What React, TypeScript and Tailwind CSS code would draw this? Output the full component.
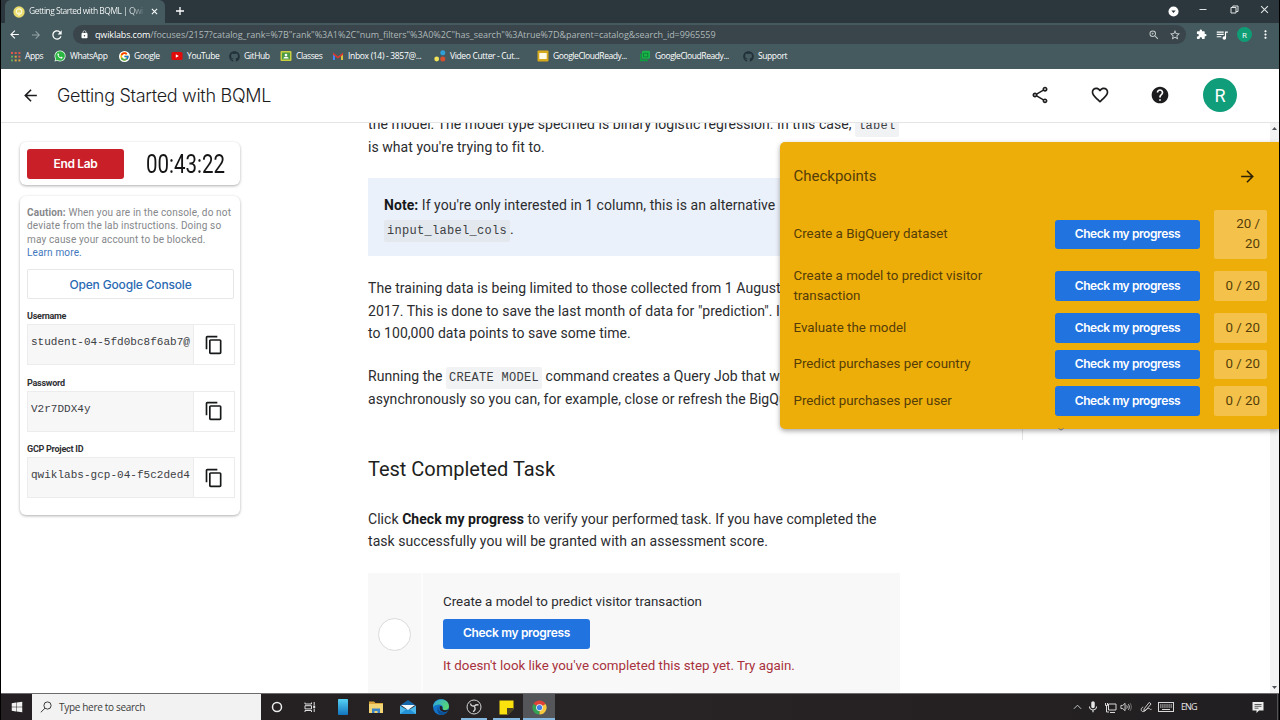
import type { ReactNode } from "react";
import {
  MdArrowBack,
  MdArrowForward,
  MdContentCopy,
  MdExtension,
  MdFavoriteBorder,
  MdHelp,
  MdLock,
  MdMoreVert,
  MdOutlineShare,
  MdQueueMusic,
  MdRefresh,
  MdStarBorder,
  MdZoomIn,
  MdMic,
} from "react-icons/md";
import { FaGithub, FaWindows } from "react-icons/fa";
import { FcGoogle } from "react-icons/fc";

function AppsIcon() {
  const colors = ["#e0574b", "#e0574b", "#e0574b", "#63a85e", "#d9a441", "#e0574b", "#63a85e", "#d9a441", "#d9a441"];
  return (
    <svg viewBox="0 0 11 11" className="size-[11px]">
      {colors.map((c, i) => (
        <rect key={i} x={1 + (i % 3) * 3.7} y={1 + Math.floor(i / 3) * 3.7} width="2" height="2" fill={c} />
      ))}
    </svg>
  );
}

function WhatsAppIcon() {
  return (
    <svg viewBox="0 0 24 24" className="size-[12px]">
      <path d="M12 1a11 11 0 0 0-9.5 16.5L1 23l5.600-1.500A11 11 0 1 0 12 1z" fill="#e9f7ee" />
      <path d="M12 2.500a9.500 9.500 0 0 0-8 14.600L3 21l4-1A9.500 9.500 0 1 0 12 2.500z" fill="#2cb742" />
      <path d="M8.500 6.500c-1.500.5-2 2-1.500 3.500 1 3.500 3.500 6 7 7.200 1.500.4 3-.4 3.300-2 0-.6-2.300-1.700-2.800-1.700-.5.1-1 1.400-1.500 1.300-2-.8-3.200-2-4-3.700 0-.5 1-1 1-1.500 0-.7-.8-3-1.500-3.100z" fill="#fff" />
    </svg>
  );
}

function YouTubeIcon() {
  return (
    <svg viewBox="0 0 12 12" className="size-[12px]">
      <rect x="0.500" y="2" width="11" height="8" rx="1.500" fill="#e00b0b" />
      <path d="M4.800 4.300v3.400L7.800 6z" fill="#fff" />
    </svg>
  );
}

function ClassroomIcon() {
  return (
    <svg viewBox="0 0 12 12" className="size-[12px]">
      <rect x="0.500" y="1" width="11" height="10" rx="1" fill="#c9cf3f" />
      <rect x="2" y="2.500" width="8" height="7" fill="#4d9b45" />
      <circle cx="6" cy="5" r="1.300" fill="#fff" />
      <path d="M3.300 8.500c.3-2.200 5.100-2.200 5.400 0z" fill="#fff" />
    </svg>
  );
}

function GmailIcon() {
  return (
    <svg viewBox="0 0 12 12" className="size-[12px]">
      <path d="M1 3v7h2V5.500z" fill="#4285f4" />
      <path d="M11 3v7H9V5.500z" fill="#d9c23c" />
      <path d="M1 2.500 6 6.500l5-4v2.200l-5 3.800-5-3.800z" fill="#d93a2f" />
    </svg>
  );
}

function VideoCutterIcon() {
  return (
    <svg viewBox="0 0 12 12" className="size-[12px]">
      <circle cx="8.800" cy="2.700" r="2.500" fill="#2f9fd8" />
      <circle cx="2.700" cy="9" r="2.400" fill="#efe35a" />
      <circle cx="8.800" cy="9" r="2.500" fill="#d6502f" />
    </svg>
  );
}

function SlidesIcon() {
  return (
    <svg viewBox="0 0 12 12" className="size-[12px]">
      <rect x="0.500" y="0.500" width="11" height="11" rx="1" fill="#d7a91c" />
      <rect x="2.300" y="3" width="7.400" height="6" fill="#fffbe6" />
    </svg>
  );
}

function GreenIcon() {
  return (
    <svg viewBox="0 0 12 12" className="size-[12px]">
      <rect x="3" y="0.800" width="8" height="8" rx="1.200" fill="#19b34a" />
      <path d="M1 3.500h1.500v6H9v1.700H1z" fill="#0e9d3e" />
      <rect x="4.600" y="3.300" width="4.200" height="3.600" fill="none" stroke="#0b7f31" strokeWidth="0.800" />
    </svg>
  );
}

const bookmarks: { label: string; icon: ReactNode; width: string; track: string }[] = [
  { label: "Apps", icon: <AppsIcon />, width: "w-[45px]", track: "tracking-[-0.400px]" },
  { label: "WhatsApp", icon: <WhatsAppIcon />, width: "w-[64px]", track: "tracking-[-0.400px]" },
  { label: "Google", icon: <FcGoogle className="size-[11px] rounded-full bg-white p-[0.500px]" />, width: "w-[53px]", track: "tracking-[-0.400px]" },
  { label: "YouTube", icon: <YouTubeIcon />, width: "w-[57px]", track: "tracking-[-0.350px]" },
  { label: "GitHub", icon: <FaGithub className="size-[11px] text-[#22303a]" />, width: "w-[52px]", track: "tracking-[-0.400px]" },
  { label: "Classes", icon: <ClassroomIcon />, width: "w-[52px]", track: "tracking-[-0.400px]" },
  { label: "Inbox (14) - 3857@...", icon: <GmailIcon />, width: "w-[102px]", track: "tracking-[-0.320px]" },
  { label: "Video Cutter - Cut...", icon: <VideoCutterIcon />, width: "w-[103px]", track: "tracking-[-0.350px]" },
  { label: "GoogleCloudReady...", icon: <SlidesIcon />, width: "w-[102px]", track: "tracking-[-0.420px]" },
  { label: "GoogleCloudReady...", icon: <GreenIcon />, width: "w-[103px]", track: "tracking-[-0.420px]" },
  { label: "Support", icon: <FaGithub className="size-[11px] text-[#22303a]" />, width: "w-[60px]", track: "tracking-[-0.400px]" },
];

function TabStrip() {
  return (
    <div className="flex h-[23px] items-end bg-[#2b373c] pl-[4px] text-white">
      <div className="flex h-[23px] w-[160px] items-center rounded-t-[6px] bg-[#455a5f] pl-[8px] pr-[4px]">
        <svg viewBox="0 0 12 12" className="size-[12px] shrink-0">
          <circle cx="6" cy="6" r="5.700" fill="#e9dc6b" />
          <circle cx="6" cy="5.500" r="2.700" fill="none" stroke="#fbf8d8" strokeWidth="1.200" />
          <path d="M6 6v4" stroke="#fbf8d8" strokeWidth="1" />
        </svg>
        <span className="ml-[4px] w-[117px] overflow-hidden whitespace-nowrap bg-linear-to-r from-white from-85% to-transparent bg-clip-text text-[8.500px] tracking-[-0.530px] text-transparent">
          Getting Started with BQML | Qwi
        </span>
        <svg viewBox="0 0 8 8" className="ml-[5px] size-[7px] shrink-0" stroke="#fff" strokeWidth="1.200">
          <path d="M1 1l6 6M7 1L1 7" />
        </svg>
      </div>
      <svg viewBox="0 0 10 10" className="mb-[7px] ml-[10px] size-[10px]" stroke="#fff" strokeWidth="1.300">
        <path d="M5 1v8M1 5h8" />
      </svg>
      <div className="ml-auto flex h-[23px] items-start pt-[5px]">
        <svg viewBox="0 0 12 12" className="mr-[20px] mt-[1px] size-[11px]">
          <circle cx="6" cy="6" r="5.500" fill="#fff" />
          <path d="M3.600 4.800h4.800L6 7.700z" fill="#2b373c" />
        </svg>
        <svg viewBox="0 0 8 8" className="mr-[23px] size-[8px]" stroke="#dfe3e4">
          <path d="M0.500 4.500h7" />
        </svg>
        <svg viewBox="0 0 9 9" className="mr-[21px] size-[9px]" stroke="#dfe3e4" fill="none">
          <path d="M1 2.500h5v5.500H1zM2.800 2.500v-1.500h5.200v5.500H6" />
        </svg>
        <svg viewBox="0 0 8 8" className="mr-[10px] size-[9px]" stroke="#dfe3e4">
          <path d="M1 1l6 6M7 1L1 7" />
        </svg>
      </div>
    </div>
  );
}

function Toolbar() {
  return (
    <div className="flex h-[22px] items-center bg-[#455a5f] pl-[7px] pr-[7px] pt-[1px] text-white">
      <MdArrowBack className="size-[13px]" />
      <MdArrowForward className="ml-[9px] size-[12px] text-[#95a3a6]" />
      <MdRefresh className="ml-[8px] size-[14px]" />
      <div className="ml-[9px] flex h-[19px] w-[1113px] items-center rounded-full bg-[#39454a] pl-[7px] pr-[5px]">
        <MdLock className="size-[9px]" />
        <span className="ml-[6px] whitespace-nowrap text-[9px] tracking-[-0.150px] text-white">qwiklabs.com</span>
        <span className="whitespace-nowrap text-[9px] tracking-[-0.030px] text-[#aeb8ba]">
          /focuses/2157?catalog_rank=%7B"rank"%3A1%2C"num_filters"%3A0%2C"has_search"%3Atrue%7D&amp;parent=catalog&amp;search_id=9965559
        </span>
        <MdZoomIn className="ml-auto size-[12px] text-[#c4cbcc]" />
        <MdStarBorder className="ml-[9px] size-[12px] text-[#d5dadb]" />
      </div>
      <MdExtension className="ml-[10px] size-[11px]" />
      <MdQueueMusic className="ml-[8px] size-[14px]" />
      <div className="ml-[8px] flex size-[15px] items-center justify-center rounded-full bg-[#0f9d75] text-[8px] leading-none">R</div>
      <MdMoreVert className="ml-[7px] size-[13px]" />
    </div>
  );
}

function BookmarksBar() {
  return (
    <div className="flex h-[24px] items-center bg-[#455a5f] pb-[2px] pl-[8px] text-[8.500px] text-white">
      {bookmarks.map((b, i) => (
        <div key={i} className={`flex shrink-0 items-center ${b.width}`}>
          <span className="flex w-[12px] shrink-0 justify-center">{b.icon}</span>
          <span className={`ml-[4px] whitespace-nowrap ${b.track}`}>{b.label}</span>
        </div>
      ))}
    </div>
  );
}

function PageHeader() {
  return (
    <header className="flex h-[54px] shrink-0 items-center border-b border-[#e3e4e6] pb-[1px] pl-[20px] pr-[42px] text-[#1c1c1e]">
      <MdArrowBack className="size-[19px]" />
      <h1 className="ml-[17px] font-[Inter] text-[18px] font-light tracking-[-0.300px]">Getting Started with BQML</h1>
      <div className="ml-auto flex items-center">
        <MdOutlineShare className="size-[20px]" />
        <MdFavoriteBorder className="ml-[40px] size-[20px]" />
        <MdHelp className="ml-[40px] size-[20px]" />
        <div className="ml-[33px] flex size-[34px] items-center justify-center rounded-full bg-[#0f9d7a] font-[Roboto] text-[18px] text-white">R</div>
      </div>
    </header>
  );
}

function Credential({ label, value }: { label: string; value: string }) {
  return (
    <div>
      <div className="h-[15px] pt-[1px] text-[9px] font-bold leading-[13px] tracking-[-0.250px] text-[#2f3033]">{label}</div>
      <div className="flex h-[41px] w-[208px] border border-[#ececee]">
        <div className="flex w-[166px] items-center overflow-hidden whitespace-nowrap border-r border-[#ececee] bg-[#f7f7f8] pb-[4px] pl-[3px] font-['Liberation_Mono',monospace] text-[11px] tracking-[0.020px] text-[#3c4043]">
          {value}
        </div>
        <div className="flex flex-1 items-center justify-center">
          <MdContentCopy className="size-[20px] text-[#17181a]" />
        </div>
      </div>
    </div>
  );
}

function Sidebar() {
  return (
    <aside className="ml-[19px] w-[220px] shrink-0 pt-[19px] font-[Roboto]">
      <div className="flex h-[43px] items-center rounded-[6px] bg-white pl-[7px] shadow-[0_1px_3px_rgba(0,0,0,0.320)]">
        <button className="h-[30px] w-[97px] rounded-[3px] bg-[#c91f28] font-[Inter] text-[12px] font-semibold tracking-[-0.350px] text-white">End Lab</button>
        <span className="ml-[22px] w-[80px] origin-left scale-x-[0.820] scale-y-[1.060] whitespace-nowrap text-[25px] leading-none text-[#151517]">00:43:22</span>
      </div>
      <div className="mt-[11px] h-[319px] rounded-[6px] bg-white px-[7px] pt-[10px] shadow-[0_1px_3px_rgba(0,0,0,0.320)]">
        <p className="whitespace-nowrap text-[10px] leading-[13.300px] tracking-[0.150px] text-[#85878a]">
          <b>Caution:</b> When you are in the console, do not
          <br />
          deviate from the lab instructions. Doing so
          <br />
          may cause your account to be blocked.
          <br />
          <span className="text-[#3f78bd]">Learn more.</span>
        </p>
        <button className="mt-[10px] h-[30px] w-[207px] rounded-[2px] border border-[#e6e7e9] pt-[1px] font-[Inter] text-[12px] font-medium tracking-[-0.170px] text-[#2a69b3]">
          Open Google Console
        </button>
        <div className="mt-[10px] flex flex-col gap-[10.500px]">
          <Credential label="Username" value="student-04-5fd0bc8f6ab7@" />
          <Credential label="Password" value="V2r7DDX4y" />
          <Credential label="GCP Project ID" value="qwiklabs-gcp-04-f5c2ded4" />
        </div>
      </div>
    </aside>
  );
}

function Code({ children, tint }: { children: ReactNode; tint?: string }) {
  return (
    <code className={`rounded-[2px] px-[3px] py-[4px] font-['Liberation_Mono',monospace] text-[12px] leading-none tracking-[0.300px] text-[#3c4043] ${tint ?? "bg-[#f1f2f4]"}`}>
      {children}
    </code>
  );
}

function Article() {
  return (
    <main className="-mt-[10px] ml-[128px] w-[532px] shrink-0 whitespace-nowrap font-[Roboto] text-[14px] leading-[22.670px] tracking-[0.050px] text-[#2b2c2f]">
      <p>
        the model. The model type specified is binary logistic regression. In this case, <Code>label</Code>
        <br />
        is what you're trying to fit to.
      </p>
      <div className="mt-[20px] h-[78px] bg-[#ebf1fa] px-[16px] pt-[16px]">
        <b className="text-[#17181a]">Note:</b> If you're only interested in 1 column, this is an alternative
        <br />
        <span className="inline-block pt-[1px]">
          <Code tint="bg-[#e3e8ef]">input_label_cols</Code>.
        </span>
      </div>
      <p className="mt-[20.500px]">
        The training data is being limited to those collected from 1 August
        <br />
        2017. This is done to save the last month of data for "prediction". It
        <br />
        to 100,000 data points to save some time.
      </p>
      <p className="mt-[20.500px]">
        Running the <Code>CREATE MODEL</Code> command creates a Query Job that will
        <br />
        asynchronously so you can, for example, close or refresh the BigQuery
      </p>
      <h2 className="mt-[43px] h-[30px] text-[20px] leading-[30px] tracking-[-0.010px] text-[#1d1e20]">Test Completed Task</h2>
      <p className="mt-[24px]">
        Click <b className="text-[#17181a]">Check my progress</b> to verify your performed task. If you have completed the
        <br />
        task successfully you will be granted with an assessment score.
      </p>
      <div className="mt-[20px] flex h-[130px] bg-[#f8f8f9] text-[13.330px] tracking-normal">
        <div className="flex w-[55px] justify-center border-r-2 border-[#fcfcfc] pt-[45px]">
          <div className="size-[33px] rounded-full border border-[#d9dadc] bg-white" />
        </div>
        <div className="pl-[20px] pt-[18px]">
          <div>Create a model to predict visitor transaction</div>
          <button className="mt-[5px] block h-[30px] w-[147px] rounded-[3px] bg-[#2173e0] font-[Inter] text-[12px] font-semibold tracking-[-0.320px] text-white">
            Check my progress
          </button>
          <div className="mt-[6px] text-[#a8323c]">It doesn't look like you've completed this step yet. Try again.</div>
        </div>
      </div>
    </main>
  );
}

const checkpoints = [
  { name: "Create a BigQuery dataset", score: "20 / 20" },
  { name: "Create a model to predict visitor transaction", score: "0 / 20" },
  { name: "Evaluate the model", score: "0 / 20" },
  { name: "Predict purchases per country", score: "0 / 20" },
  { name: "Predict purchases per user", score: "0 / 20" },
];

function CheckpointsPanel() {
  return (
    <section className="absolute right-0 top-[19px] h-[287px] w-[499px] rounded-l-[5px] bg-[#eeae0a] pl-[13.500px] pr-[12px] pt-[0.500px] font-[Roboto] text-[#553d09] shadow-[0_2px_5px_rgba(0,0,0,0.350)]">
      <div className="flex h-[67px] items-center justify-between">
        <h3 className="text-[15px]">Checkpoints</h3>
        <MdArrowForward className="mr-[10px] size-[19px] text-[#2e2205]" />
      </div>
      <div className="flex flex-col gap-[7px] text-[13.330px] leading-[20px]">
        {checkpoints.map((c) => (
          <div key={c.name} className="flex items-center">
            <div className="w-[200px]">{c.name}</div>
            <button className="ml-[61.500px] h-[29.500px] w-[145px] rounded-[3px] bg-[#2173e0] font-[Inter] text-[12px] font-semibold tracking-[-0.400px] text-white">
              Check my progress
            </button>
            <div className="ml-[13.500px] w-[53px] rounded-[2px] bg-[#f4c24a] py-[4.750px] pl-[10px] pr-[6.500px] text-right">{c.score}</div>
          </div>
        ))}
      </div>
    </section>
  );
}

function Scrollbar() {
  return (
    <div className="flex w-[9px] shrink-0 flex-col justify-between bg-[#f3f3f4] py-[3px]">
      <svg viewBox="0 0 9 5" className="h-[5px] w-[9px]">
        <path d="M2 4l2.500-3L7 4z" fill="#505356" />
      </svg>
      <svg viewBox="0 0 9 5" className="h-[5px] w-[9px]">
        <path d="M2 1l2.500 3L7 1z" fill="#505356" />
      </svg>
    </div>
  );
}

function TaskButton({ children, state }: { children: ReactNode; state?: "open" | "active" }) {
  const look =
    state === "active"
      ? "bg-[#55565a] border-b-2 border-[#84b8e0]"
      : state === "open"
        ? "border-b-2 border-[#84b8e0] mx-[3px]"
        : "mx-[3px]";
  const width = state === "active" ? "w-[32px]" : "w-[26.750px]";
  return <div className={`flex h-[26px] shrink-0 items-center justify-center ${width} ${look}`}>{children}</div>;
}

function Taskbar() {
  return (
    <footer className="flex h-[27px] shrink-0 items-center border-t border-[#6d6b6c] bg-linear-to-r from-[#231f22] via-[#282425] to-[#211e21] text-white">
      <div className="flex h-full w-[31px] items-center justify-center">
        <FaWindows className="size-[12px] text-[#f1f1f1]" />
      </div>
      <div className="flex h-full w-[229px] items-center bg-[#f2f2f2] pl-[8px] text-[#3c3c3c]">
        <svg viewBox="0 0 12 12" className="size-[12px]" fill="none" stroke="#3c3c3c">
          <circle cx="7.500" cy="4.500" r="3.600" />
          <path d="M5 7.200L0.800 11.300" />
        </svg>
        <span className="ml-[7px] text-[10px] tracking-[-0.310px]">Type here to search</span>
      </div>
      <TaskButton>
        <svg viewBox="0 0 12 12" className="size-[12px]" fill="none" stroke="#eee" strokeWidth="1.500">
          <circle cx="6" cy="6" r="4.500" />
        </svg>
      </TaskButton>
      <TaskButton>
        <svg viewBox="0 0 12 12" className="size-[12px]" fill="none" stroke="#e0e0e0">
          <path d="M1 1.500v1.500h6.500V1.500M1 11V9.500h6.500V11M1 4.700h6.500v3.200H1zM10.200 1v3M10.200 7.500V11" />
          <rect x="9.700" y="5" width="1" height="1.500" fill="#e0e0e0" />
        </svg>
      </TaskButton>
      <TaskButton>
        <svg viewBox="0 0 12 18" className="h-[18px] w-[12px]">
          <defs>
            <linearGradient id="phone" x1="0" y1="0" x2="0" y2="1">
              <stop offset="0" stopColor="#57d2f3" />
              <stop offset="1" stopColor="#1274bd" />
            </linearGradient>
          </defs>
          <rect x="1" y="1" width="10" height="16" rx="0.800" fill="url(#phone)" />
        </svg>
      </TaskButton>
      <TaskButton>
        <svg viewBox="0 0 16 14" className="h-[14px] w-[16px]">
          <path d="M1 1.500h5l1.500 1.500H15v10H1z" fill="#d9a53a" />
          <rect x="1" y="4" width="14" height="9" fill="#f4d575" />
          <path d="M4 13V8.500h8V13H9.500v-2h-3v2z" fill="#3b85c6" />
        </svg>
      </TaskButton>
      <TaskButton>
        <svg viewBox="0 0 18 16" className="h-[16px] w-[18px]">
          <path d="M1 6.500L9 1l8 5.500z" fill="#1466a8" />
          <path d="M1 6.500l8 5 8-5V15H1z" fill="#4ab6ea" />
          <path d="M1 15l8-6 8 6z" fill="#2391d6" />
          <path d="M2 6h14L9 11z" fill="#f3f9fd" />
        </svg>
      </TaskButton>
      <TaskButton>
        <svg viewBox="0 0 18 18" className="size-[18px]">
          <defs>
            <linearGradient id="edge" x1="0" y1="0" x2="1" y2="0.500">
              <stop offset="0" stopColor="#2aa3e6" />
              <stop offset="1" stopColor="#58d673" />
            </linearGradient>
          </defs>
          <circle cx="9" cy="9" r="8" fill="#1273c8" />
          <path d="M1 8.500C2-1 17-1 17 8.500c0 3.500-4.500 4.500-6.500 2.700 1.500-2-.5-4.700-3-4.700C4.500 6.500 2 7.500 1 9z" fill="url(#edge)" />
          <path d="M6.800 8c-2 3.500 1.700 7.500 8.200 6-2 2-4.200 3-6.500 2.800C5 16 4.500 10 6.800 8z" fill="#0c4f94" />
          <path d="M8 8.300c1.500-1 3 .8 2.300 2.700 1 1.600 4.200 1.700 6 .5-.6 2-2 2.500-4 2.500C8.500 14 6.800 10.500 8 8.300z" fill="#241f22" />
        </svg>
      </TaskButton>
      <TaskButton state="open">
        <svg viewBox="0 0 16 16" className="mt-[2px] size-[16px]" fill="none" stroke="#d3d3d3">
          <circle cx="8" cy="8" r="7" />
          <path d="M4.500 4.500c.3 2.200 2 3 3.700 2.300M12.500 6c-2.200-.8-3.800.2-4.200 1.800M8.500 8c1.200 1.500.6 3.800-1.500 4.700" strokeWidth="1.400" />
        </svg>
      </TaskButton>
      <TaskButton state="open">
        <svg viewBox="0 0 15 15" className="mt-[2px] size-[15px]">
          <path d="M0.500 0.500h14V9L9 14.500H0.500z" fill="#fbe10d" />
          <path d="M8 8h6.500v1.500l-5 5H8z" fill="#4c4524" />
        </svg>
      </TaskButton>
      <TaskButton state="active">
        <svg viewBox="0 0 16 16" className="mt-[2px] size-[15px]">
          <path d="M8 8L1.500 4.200A7.500 7.500 0 0 1 14.500 4.200z" fill="#e04335" />
          <path d="M8 8L1.500 4.200A7.500 7.500 0 0 0 8 15.500z" fill="#34a353" />
          <path d="M8 8l6.500-3.800A7.500 7.500 0 0 1 8 15.500z" fill="#f8c93c" />
          <circle cx="8" cy="8" r="3.600" fill="#f2f2f2" />
          <circle cx="8" cy="8" r="2.800" fill="#3f7fe6" />
        </svg>
      </TaskButton>
      <div className="ml-auto flex items-center text-[#e6e6e6]">
        <svg viewBox="0 0 10 6" className="h-[6px] w-[9px]" fill="none" stroke="#d8d8d8">
          <path d="M1 5l4-4 4 4" />
        </svg>
        <MdMic className="ml-[4px] size-[14px]" />
        <svg viewBox="0 0 13 11" className="ml-[4px] h-[11px] w-[13px]" fill="none" stroke="#d8d8d8">
          <path d="M4.500 2H12v6H4.500zM6 10.500h5M1.500 1v2.500h2V1M2.500 3.500V10H5" />
        </svg>
        <svg viewBox="0 0 13 12" className="ml-[3px] h-[12px] w-[12px]" fill="none" stroke="#d8d8d8">
          <path d="M1 4.300h2L5.500 2v8L3 7.700H1zM7.200 4.300c.8 1 .8 2.400 0 3.400M9 3c1.400 1.700 1.400 4.300 0 6" />
          <path d="M10.800 1.800c2 2.500 2 6 0 8.400" stroke="#777" />
        </svg>
        <svg viewBox="0 0 13 13" className="ml-[8px] size-[12px]" fill="none" stroke="#d8d8d8">
          <path d="M4.500 8.500l5.500-7 2 1.700L6.500 9.700l-2.400.8zM3.500 6.500c-3 1-3 5 0 5s3-3.500 5.500-3.500 1.500 2 3.500 1" />
        </svg>
        <svg viewBox="0 0 16 10" className="ml-[6px] h-[10px] w-[16px]" fill="none" stroke="#d8d8d8">
          <rect x="0.500" y="0.500" width="15" height="9" />
          <path d="M2 3h12M2 5h12" strokeDasharray="1.500 0.600" />
          <path d="M4 7.500h8" />
        </svg>
        <span className="ml-[7px] w-[16px] text-[9px] tracking-[-0.900px]">ENG</span>
        <svg viewBox="0 0 12 12" className="ml-[55px] mr-[13px] size-[12px]">
          <path d="M0.500 1h11v8.500H7L4.500 12V9.500h-4z" fill="#ececec" />
          <path d="M2.500 3.500h7M2.500 5.300h7M2.500 7.200h4" stroke="#3a373a" strokeWidth="0.800" />
        </svg>
        <div className="h-[26px] w-[2px] border-l border-[#555355]" />
      </div>
    </footer>
  );
}

export default function App() {
  return (
    <div className="flex h-[720px] w-[1280px] flex-col overflow-hidden border-x border-black bg-white font-['Open_Sans',sans-serif]">
      <TabStrip />
      <Toolbar />
      <BookmarksBar />
      <PageHeader />
      <div className="relative flex min-h-0 flex-1 overflow-hidden">
        <Sidebar />
        <Article />
        <div className="ml-[122px] mt-[100px] h-[217px] w-[1px] shrink-0 bg-[#e3e4e6]" />
        <div className="ml-auto" />
        <Scrollbar />
        <CheckpointsPanel />
        <svg viewBox="0 0 6 3" className="absolute left-[1057px] top-[305px] h-[3px] w-[6px]" fill="none" stroke="#6b6b6e">
          <path d="M0.500 0.500q2.500 3 5 0" />
        </svg>
        <svg viewBox="0 0 6 10" className="absolute left-[672px] top-[393px] h-[9px] w-[6px]" fill="none" stroke="#555" strokeWidth="0.900">
          <path d="M0.500 0.500L3 1l2.500-.5M3 1v8M0.500 9.500L3 9l2.500.5" />
        </svg>
      </div>
      <Taskbar />
    </div>
  );
}
